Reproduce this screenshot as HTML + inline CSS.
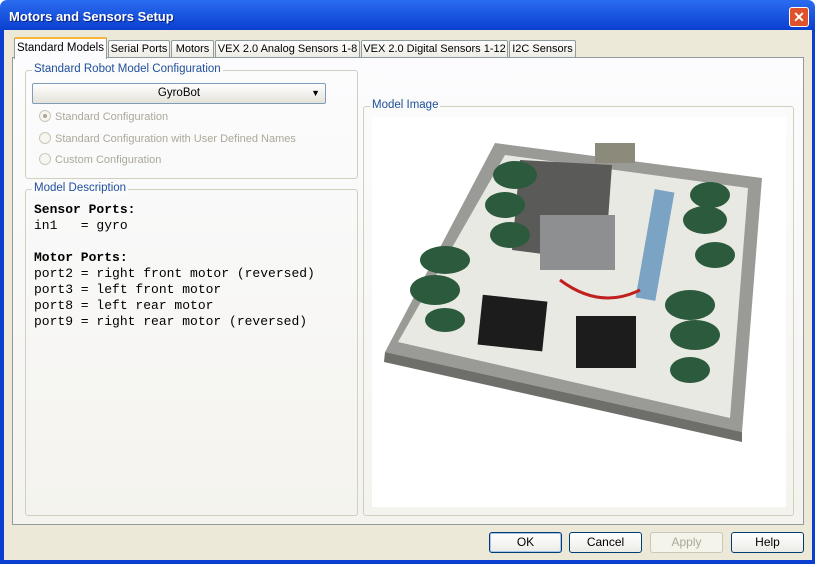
<!DOCTYPE html>
<html><head><style>
body{margin:0;width:817px;height:567px;background:#fff;position:relative;overflow:hidden;font-family:"Liberation Sans",sans-serif;font-size:11px;}
.abs{position:absolute}
.win{left:0;top:0;width:815px;height:564px;background:linear-gradient(#2a6cf0,#0a3fd0 30px,#0a3fd0);border-radius:7px 7px 0 0}
.title{left:9px;top:9px;color:#fff;font-weight:bold;font-size:13px;text-shadow:1px 1px #0a1f7a}
.body{left:4px;top:30px;width:808px;height:530px;background:#ece9d8}
.close{left:789px;top:7px;width:18px;height:18px;background:#e0522b;border:1px solid #fff;border-radius:3px;color:#fff;font-weight:bold;font-size:14px;line-height:18px;text-align:center}
.panel{left:12px;top:57px;width:790px;height:466px;border:1px solid #919b9c;background:linear-gradient(#fcfcfe,#f4f3ee)}
.tab{top:40px;height:16px;border:1px solid #919b9c;border-bottom:none;background:linear-gradient(#fff,#ecebe5);line-height:16px;text-align:center;border-radius:2px 2px 0 0;font-size:11px;white-space:nowrap;overflow:hidden}
.grp{border:1px solid #d0d0bf;border-radius:3px}
.gl{background:#fbfbfa;color:#1f4f9e;padding:0 2px;top:-8px;left:6px;position:absolute;white-space:nowrap}
.rad{color:#aca899;font-size:11px}
.rad i{display:inline-block;width:10px;height:10px;border:1px solid #cac8bb;border-radius:50%;vertical-align:-2px;margin-right:4px;background:#f6f5f0;position:relative}
.mono{font-family:"Liberation Mono",monospace;font-size:13px;line-height:16px;color:#000;white-space:pre}
.btn{top:532px;width:71px;height:19px;border:1px solid #003c74;border-radius:3px;background:linear-gradient(#fff,#ecebe6);text-align:center;line-height:19px;font-size:12px}
</style></head><body>
<div class="abs win"></div>
<div class="abs title">Motors and Sensors Setup</div>
<div class="abs close">✕</div>
<div class="abs body"></div>
<div class="abs panel"></div>
<div class="abs tab" style="left:14px;top:37px;width:91px;height:20px;background:#fcfcfe;border-top:2px solid #f7b43b;line-height:19px;font-size:11.5px">Standard Models</div>
<div class="abs tab" style="left:108px;width:60px">Serial Ports</div>
<div class="abs tab" style="left:171px;width:41px">Motors</div>
<div class="abs tab" style="left:215px;width:143px">VEX 2.0 Analog Sensors 1-8</div>
<div class="abs tab" style="left:361px;width:145px">VEX 2.0 Digital Sensors 1-12</div>
<div class="abs tab" style="left:509px;width:65px">I2C Sensors</div>

<div class="abs grp" style="left:25px;top:70px;width:331px;height:107px"><span class="gl" style="font-size:11.5px">Standard Robot Model Configuration</span></div>
<div class="abs" style="left:32px;top:83px;width:292px;height:19px;border:1px solid #7f9db9;border-radius:2px;background:linear-gradient(#fff,#e4e2da);text-align:center;line-height:19px;font-size:11.5px">GyroBot<span style="position:absolute;right:5px;top:0;font-size:9px">▼</span></div>
<div class="abs rad" style="left:39px;top:110px"><i><b style="position:absolute;left:3px;top:3px;width:4px;height:4px;border-radius:50%;background:#aca899"></b></i>Standard Configuration</div>
<div class="abs rad" style="left:39px;top:132px"><i></i>Standard Configuration with User Defined Names</div>
<div class="abs rad" style="left:39px;top:153px"><i></i>Custom Configuration</div>

<div class="abs grp" style="left:25px;top:189px;width:331px;height:325px"><span class="gl" style="font-size:11.5px">Model Description</span></div>
<div class="abs mono" style="left:34px;top:202px"><b>Sensor Ports:</b>
in1   = gyro

<b>Motor Ports:</b>
port2 = right front motor (reversed)
port3 = left front motor
port8 = left rear motor
port9 = right rear motor (reversed)</div>

<div class="abs grp" style="left:363px;top:106px;width:429px;height:408px"><span class="gl" style="font-size:11.5px;background:#fafaf8">Model Image</span></div>
<div class="abs" style="left:372px;top:117px;width:414px;height:390px;background:#fff"></div>
<svg class="abs" style="left:0;top:0" width="817" height="567">
<polygon points="495,143 762,178 742,432 385,352" fill="#9a9a96"/>
<polygon points="505,155 748,188 730,418 398,342" fill="#e9e9e4"/>
<polygon points="385,352 742,432 742,442 384,362" fill="#6e6e6a"/>
<polygon points="520,160 612,165 605,262 512,250" fill="#5a5a58"/>
<rect x="540" y="215" width="75" height="55" fill="#8d8f90"/>
<rect x="595" y="143" width="40" height="20" fill="#8c8a7a"/>
<rect x="480" y="298" width="65" height="50" fill="#1c1c1c" transform="rotate(6 512 323)"/>
<rect x="576" y="316" width="60" height="52" fill="#1c1c1c"/>
<rect x="645" y="190" width="20" height="110" fill="#7aa3c4" transform="rotate(10 655 245)"/>
<g fill="#2c5a3c">
<ellipse cx="515" cy="175" rx="22" ry="14"/><ellipse cx="505" cy="205" rx="20" ry="13"/><ellipse cx="510" cy="235" rx="20" ry="13"/>
<ellipse cx="445" cy="260" rx="25" ry="14"/><ellipse cx="435" cy="290" rx="25" ry="15"/><ellipse cx="445" cy="320" rx="20" ry="12"/>
<ellipse cx="710" cy="195" rx="20" ry="13"/><ellipse cx="705" cy="220" rx="22" ry="14"/><ellipse cx="715" cy="255" rx="20" ry="13"/>
<ellipse cx="690" cy="305" rx="25" ry="15"/><ellipse cx="695" cy="335" rx="25" ry="15"/><ellipse cx="690" cy="370" rx="20" ry="13"/>
</g>
<path d="M560 280 Q600 310 640 290" stroke="#c0201e" stroke-width="3" fill="none"/>
</svg>

<div class="abs btn" style="left:489px;border-color:#003c74;box-shadow:inset 0 0 0 1px #a8c4ec">OK</div>
<div class="abs btn" style="left:569px">Cancel</div>
<div class="abs btn" style="left:650px;border-color:#c9c7ba;color:#aca899;background:#f5f4ea">Apply</div>
<div class="abs btn" style="left:731px">Help</div>
</body></html>
